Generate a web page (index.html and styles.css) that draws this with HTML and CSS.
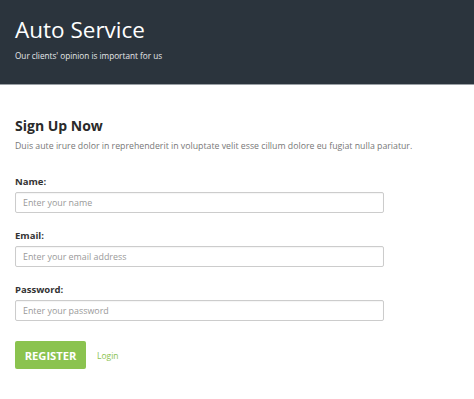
FILE: index.html
```html
<!DOCTYPE html>
<html>
<head>
<meta charset="utf-8">
<link rel="stylesheet" href="styles.css">
</head>
<body>
<header class="hero">
  <h1 class="hero-title">Auto Service</h1>
  <p class="hero-sub">Our clients' opinion is important for us</p>
</header>
<main class="content">
  <h2 class="form-title">Sign Up Now</h2>
  <p class="form-desc">Duis aute irure dolor in reprehenderit in voluptate velit esse cillum dolore eu fugiat nulla pariatur.</p>
  <form class="form">
    <div class="field">
      <label class="label">Name:</label>
      <input class="input" type="text" placeholder="Enter your name">
    </div>
    <div class="field">
      <label class="label">Email:</label>
      <input class="input" type="text" placeholder="Enter your email address">
    </div>
    <div class="field">
      <label class="label">Password:</label>
      <input class="input" type="password" placeholder="Enter your password">
    </div>
    <div class="actions">
      <button class="btn" type="button">REGISTER</button>
      <a class="link" href="#">Login</a>
    </div>
  </form>
</main>
</body>
</html>
```
FILE: styles.css
```css
* { box-sizing: border-box; }
body {
  margin: 0;
  font-family: "Open Sans", "Noto Sans", sans-serif;
  background: #fff;
  color: #333;
}
.hero {
  background: #2b343d;
  height: 85px;
  border-bottom: 1px solid #9aa0a5;
  padding: 15px 15px 0;
}
.hero-title {
  margin: 0;
  font-weight: 400;
  font-size: 22.5px;
  line-height: 30px;
  color: #fff;
}
.hero-sub {
  margin: 5px 0 0;
  font-size: 8.2px;
  line-height: 12px;
  color: #e6e8ea;
}
.content {
  padding: 31px 15px 0;
}
.form-title {
  margin: 0;
  font-size: 14px;
  font-weight: 700;
  line-height: 20px;
  color: #2a2a2a;
}
.form-desc {
  margin: 4px 0 0;
  font-size: 8.75px;
  line-height: 12px;
  color: #777;
}
.form {
  margin-top: 23px;
  display: flex;
  flex-direction: column;
  gap: 16px;
}
.field {
  display: flex;
  flex-direction: column;
  gap: 3px;
}
.label {
  font-size: 9.5px;
  font-weight: 700;
  line-height: 14px;
  color: #333;
}
.input {
  width: 369px;
  height: 21px;
  border: 1px solid #ccc;
  border-radius: 2px;
  padding: 0 7px;
  font-family: "Open Sans", sans-serif;
  font-size: 8.9px;
  color: #555;
  box-shadow: inset 0 1px 1px rgba(0,0,0,0.04);
}
.input::placeholder { color: #999; }
.actions {
  margin-top: 4px;
  display: flex;
  align-items: center;
  gap: 11px;
}
.btn {
  width: 71px;
  height: 28px;
  border: none;
  border-radius: 2px;
  background: #8bc34f;
  color: #fff;
  font-family: "Open Sans", sans-serif;
  font-weight: 700;
  font-size: 11.2px;
  padding: 0;
}
.link {
  font-size: 8.5px;
  color: #8bc34f;
  text-decoration: none;
}
```
